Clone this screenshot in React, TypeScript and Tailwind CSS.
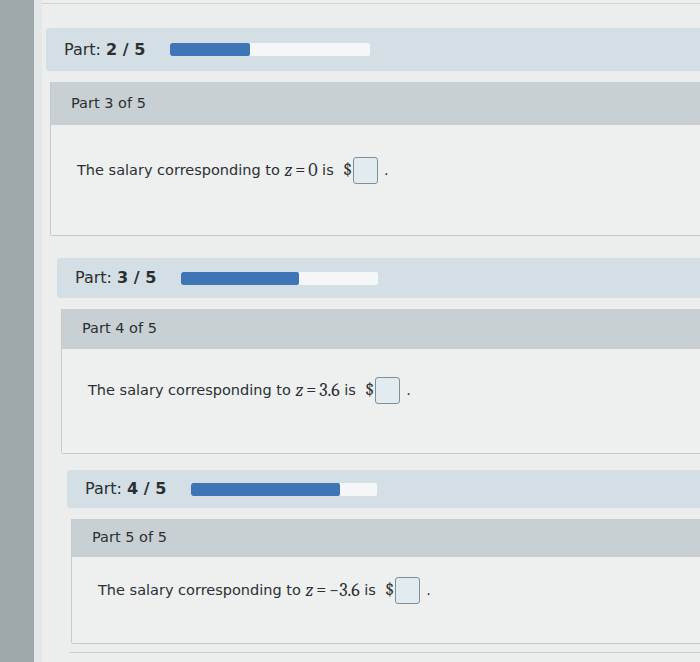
import React from "react";

type Step = {
    done: number;
    total: number;
    part: number;
    value: string;
    indent: string;
    gapTop: string;
    barH: string;
    headH: string;
    bodyH: string;
    textTop: string;
    track: string;
};

const steps: Step[] = [
    { done: 2, total: 5, part: 3, value: "0", indent: "ml-[4px]", gapTop: "mt-[24px]", barH: "h-[43px]", headH: "h-[43px]", bodyH: "h-[110px]", textTop: "pt-[32px]", track: "w-[200px]" },
    { done: 3, total: 5, part: 4, value: "3.6", indent: "ml-[15px]", gapTop: "mt-[22px]", barH: "h-[40px]", headH: "h-[40px]", bodyH: "h-[104px]", textTop: "pt-[28px]", track: "w-[197px]" },
    { done: 4, total: 5, part: 5, value: "\u22123.6", indent: "ml-[25px]", gapTop: "mt-[16px]", barH: "h-[38px]", headH: "h-[38px]", bodyH: "h-[86px]", textTop: "pt-[20px]", track: "w-[186px]" },
];

function Progress({ done, total, width }: { done: number; total: number; width: string }) {
    return (
        <div className={`h-[13px] ${width} bg-[#f4f6f7] rounded-[2px] overflow-hidden`}>
            <div className="h-full bg-[#3f74b6] rounded-[2px]" style={{ width: `${(done / total) * 100}%` }} />
        </div>
    );
}

function Section({ s }: { s: Step }) {
    return (
        <div className={`${s.indent} ${s.gapTop}`}>
            {/* progress strip */}
            <div className={`${s.barH} bg-[#d4dee5] rounded-l-[3px] flex items-center pl-[18px] gap-[20px]`}>
                <span className="text-[16px] text-[#2b2f33] w-[86px]">
                    Part: <b className="font-bold">{s.done} / {s.total}</b>
                </span>
                <Progress done={s.done} total={s.total} width={s.track} />
            </div>
            <div className="ml-[4px] mt-[11px] border-l border-b border-[#c4cacc] rounded-bl-[3px]">
                <div className={`${s.headH} bg-[#c9d0d3] flex items-center pl-[20px] text-[14.5px] text-[#2b2f33]`}>
                    Part {s.part} of {s.total}
                </div>
                <div className={`${s.bodyH} bg-[#eef0f0] pl-[26px] ${s.textTop}`}>
                    <div className="flex items-center text-[14.5px] text-[#2b2f33]">
                        <span>The salary corresponding to&nbsp;</span>
                        <span className="font-serif text-[18px]">
                            <i>z</i>
                            <span className="mx-[3px]">=</span>
                            {s.value}
                        </span>
                        <span>&nbsp;is&nbsp;&nbsp;</span>
                        <span className="font-serif text-[18px]">$</span>
                        <span className="ml-[1px] w-[25px] h-[27px] border border-[#7e8f96] rounded-[3px] bg-[#e2ecf0]" />
                        <span className="ml-[6px]">.</span>
                    </div>
                </div>
            </div>
        </div>
    );
}

export default function App() {
    return (
        <div className="w-[700px] h-[662px] overflow-hidden flex bg-[#eceeed] font-['DejaVu_Sans',sans-serif]">
            <div className="w-[34px] shrink-0 bg-[#9ea7aa]" />
            <div className="w-[8px] shrink-0 bg-[#e4e7e7]" />
            <div className="flex-1 min-w-0 border-t border-[#cfd3d4] mt-[3px]">
                {steps.map((s) => (
                    <Section key={s.part} s={s} />
                ))}
                <div className="ml-[28px] mt-[8px] border-t border-[#c9cdce]" />
            </div>
        </div>
    );
}
